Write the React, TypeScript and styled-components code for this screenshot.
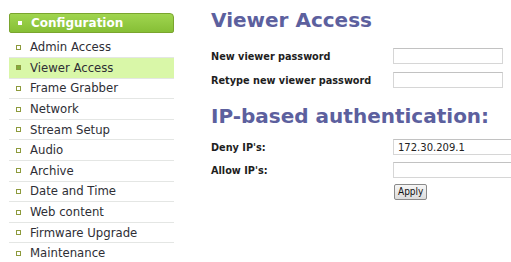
import React from "react";
import styled, { createGlobalStyle } from "styled-components";

const Global = createGlobalStyle`
  html, body { margin: 0; padding: 0; background: #ffffff; overflow: hidden; }
  body { font-family: "DejaVu Sans", Verdana, sans-serif; }
`;

const Page = styled.div`
  display: flex;
  align-items: flex-start;
  width: 511px;
  height: 262px;
  overflow: hidden;
`;

const Sidebar = styled.nav`
  width: 165px;
  margin: 13px 0 0 9px;
  flex: none;
`;

const Header = styled.div`
  height: 18px;
  border: 1px solid #7aa52e;
  border-radius: 2px 4px 2px 2px;
  background: linear-gradient(#a0d54f, #86bf36);
  display: flex;
  align-items: center;
  gap: 9px;
  padding-left: 8px;
  color: #ffffff;
  font-weight: bold;
  font-size: 12px;
  margin-bottom: 4.5px;
`;

const HeaderBullet = styled.span`
  width: 4px;
  height: 4px;
  background: #ffffff;
  flex: none;
`;

const MenuList = styled.ul`
  list-style: none;
  margin: 0;
  padding: 0;
`;

const MenuItem = styled.li<{ $active?: boolean }>`
  height: 19.6px;
  border-bottom: 1px solid #e4e6e4;
  display: flex;
  align-items: center;
  gap: 9px;
  padding-left: 7px;
  font-size: 11.7px;
  color: #2e2e35;
  background: ${(p) => (p.$active ? "#d9f7a8" : "transparent")};
`;

const Bullet = styled.span<{ $active?: boolean }>`
  width: 3px;
  height: 3px;
  border: 1px solid #8d9a3c;
  background: ${(p) => (p.$active ? "#7fae3a" : "#ffffff")};
  flex: none;
`;

const Main = styled.main`
  margin-left: 37px;
  padding-top: 9px;
  flex: 1;
  min-width: 0;
`;

const Title = styled.h1`
  margin: 0;
  font-size: 20px;
  line-height: 23px;
  font-weight: bold;
  color: #5c609e;
  white-space: nowrap;
`;

const FormGrid = styled.div<{ $rowGap: number }>`
  display: grid;
  grid-template-columns: 182px 1fr;
  row-gap: ${(p) => p.$rowGap}px;
  align-items: center;
`;

const Label = styled.div`
  font-family: "DejaVu Sans Condensed", "DejaVu Sans", Verdana, sans-serif;
  font-stretch: condensed;
  font-size: 10.8px;
  font-weight: bold;
  color: #1e1e1e;
  white-space: nowrap;
`;

const Input = styled.input<{ $wide?: boolean }>`
  box-sizing: border-box;
  width: ${(p) => (p.$wide ? "140px" : "110px")};
  height: 16px;
  margin: 0;
  padding: 0 4px;
  border: 1px solid #d6d6d6;
  border-top-color: #c2c2c2;
  font-family: "DejaVu Sans", Verdana, sans-serif;
  font-size: 10px;
  color: #222;
  background: #fff;
  outline: none;
`;

const ButtonRow = styled.div`
  padding-left: 183px;
  margin-top: 2px;
`;

const Button = styled.button`
  box-sizing: border-box;
  height: 16px;
  padding: 0 3px;
  margin: 0;
  font-family: "DejaVu Sans Condensed", "DejaVu Sans", Verdana, sans-serif;
  font-size: 10px;
  color: #111;
  border: 1px solid #8a8a8a;
  border-radius: 2px;
  background: linear-gradient(#f6f6f6, #dcdcdc);
`;

const Section = styled.section<{ $top: number }>`
  margin-top: ${(p) => p.$top}px;
`;

const items = [
  "Admin Access",
  "Viewer Access",
  "Frame Grabber",
  "Network",
  "Stream Setup",
  "Audio",
  "Archive",
  "Date and Time",
  "Web content",
  "Firmware Upgrade",
  "Maintenance",
];

export default function App() {
  return (
    <>
      <Global />
      <Page>
        <Sidebar>
          <Header>
            <HeaderBullet />
            Configuration
          </Header>
          <MenuList>
            {items.map((it) => (
              <MenuItem key={it} $active={it === "Viewer Access"}>
                <Bullet $active={it === "Viewer Access"} />
                {it}
              </MenuItem>
            ))}
          </MenuList>
        </Sidebar>
        <Main>
          <Title>Viewer Access</Title>
          <Section $top={16}>
            <FormGrid $rowGap={8}>
              <Label>New viewer password</Label>
              <Input type="password" />
              <Label>Retype new viewer password</Label>
              <Input type="password" />
            </FormGrid>
          </Section>
          <Section $top={17}>
            <Title>IP-based authentication:</Title>
          </Section>
          <Section $top={11}>
            <FormGrid $rowGap={7}>
              <Label>Deny IP's:</Label>
              <Input $wide defaultValue="172.30.209.1" />
              <Label>Allow IP's:</Label>
              <Input $wide />
            </FormGrid>
            <ButtonRow>
              <Button>Apply</Button>
            </ButtonRow>
          </Section>
        </Main>
      </Page>
    </>
  );
}
